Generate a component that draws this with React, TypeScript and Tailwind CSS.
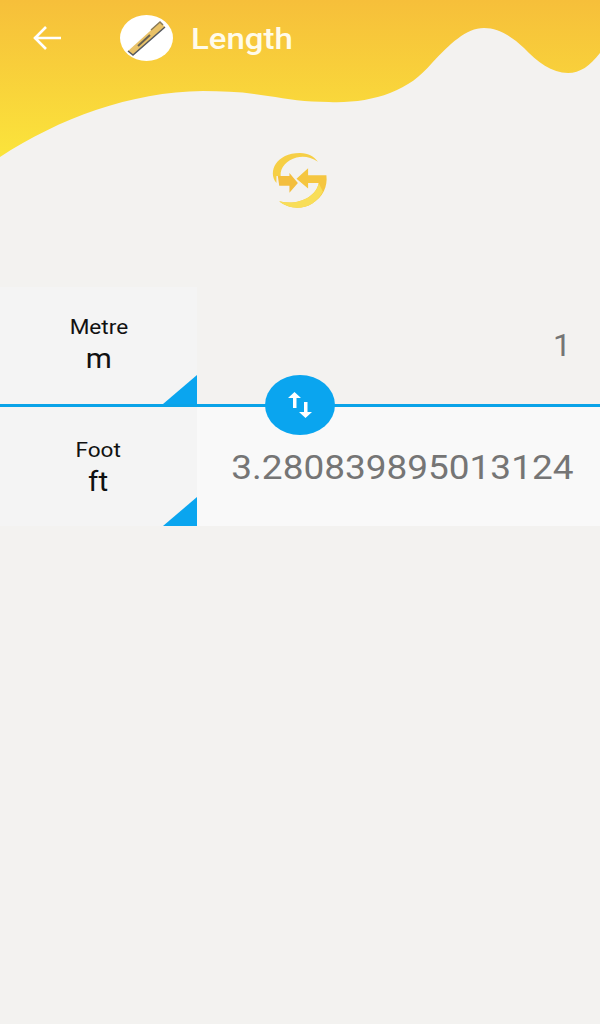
import React from 'react';

const Corner = () => (
  <div className="absolute bottom-0 right-0 w-[34px] h-[29px] bg-[#0AA5EF] [clip-path:polygon(100%_0,100%_100%,0_100%)]" />
);

const UnitCell = ({ name, symbol, pad }: { name: string; symbol: string; pad: string }) => (
  <div className={`relative w-[197px] shrink-0 bg-[#F4F4F4] flex flex-col items-center text-[#111] ${pad}`}>
    <span className="text-[20px] leading-[26px] scale-x-[1.13]">{name}</span>
    <span className="text-[27px] leading-[38px] scale-x-[1.1]">{symbol}</span>
    <Corner />
  </div>
);

const Wave = () => (
  <svg className="absolute top-0 left-0" width="600" height="160" viewBox="0 0 600 160">
    <defs>
      <linearGradient id="wave" x1="0" y1="0" x2="0" y2="1">
        <stop offset="0" stopColor="#F6BF3A" />
        <stop offset="1" stopColor="#FBE43B" />
      </linearGradient>
    </defs>
    <path
      d="M0 0H600V53C590 66 580 73 568 73C552 73 537 62 524 48C511 36 498 28 484 28C466 28 450 44 432 63C420 77 408 86 390 93C372 100 350 103 329 102C305 102 288 99 268 96C245 92 225 91 203 91C130 92 60 118 0 157Z"
      fill="url(#wave)"
    />
  </svg>
);

const Logo = () => (
  <svg width="88" height="77" viewBox="0 0 250 210">
    <path d="M58 112C32 80 58 27 125 27C150 27 165 38 176 52C155 38 135 35 115 40C88 47 68 68 70 92H58Z" fill="#F6CF45" />
    <path d="M62 92H95V84L119 112L95 140V120H66Z" fill="#F3BE3E" />
    <path d="M200 90H148V70L115 100L148 128V112H178C172 150 120 178 66 164C90 184 128 190 160 170C190 152 204 122 200 90Z" fill="#F5C640" />
    <path d="M178 112C172 150 120 178 66 164C90 184 128 190 160 170C172 162 184 150 190 136Z" fill="#F8DE58" />
  </svg>
);

export default function App() {
  return (
    <div className="relative w-[600px] min-h-[1024px] bg-[#F3F2F0] font-['Roboto',sans-serif]">
      <Wave />

      {/* Toolbar */}
      <div className="relative h-[287px]">
        <div className="flex items-center h-[76px] pl-[32px]">
          <svg width="30" height="26" viewBox="0 0 30 26" fill="none" stroke="#fff" strokeWidth="2.6">
            <path d="M2 13H29M14 2L3 13L14 24" />
          </svg>
          <div className="ml-[58px] w-[53px] h-[46px] rounded-[50%] bg-white flex items-center justify-center">
            <svg width="40" height="36" viewBox="0 0 40 36">
              <path d="M1 31L33 2L38 7L6 35Z" fill="#E9C268" />
              <path d="M1 31L6 35L38 7" fill="none" stroke="#55595F" strokeWidth="1.5" />
              <path d="M24 10L33 2L36 5" fill="none" stroke="#8A7A55" strokeWidth="1.5" />
              <path d="M11 26L23 15" stroke="#6A6250" strokeWidth="2" />
            </svg>
          </div>
          <span className="ml-[18px] text-[30px] font-medium text-[#FFFBEA] origin-left scale-x-110">Length</span>
        </div>
        <div className="flex justify-center mt-[66px]">
          <Logo />
        </div>
      </div>

      {/* Conversion rows */}
      <div className="relative">
        <div className="flex h-[117px]">
          <UnitCell name="Metre" symbol="m" pad="pt-[27px]" />
          <div className="flex-1 flex items-center justify-end pr-[29px] pb-[1px] text-[32px] text-[#757575]">1</div>
        </div>
        <div className="h-[3px] bg-[#0AA3E8]" />
        <div className="flex h-[119px]">
          <UnitCell name="Foot" symbol="ft" pad="pt-[30px]" />
          <div className="flex-1 flex items-center justify-end pr-[27px] pt-[2px] bg-[#F9F9F9] text-[#757575]">
            <span className="text-[33px] origin-right scale-x-[1.12]">3.280839895013124</span>
          </div>
        </div>

        {/* Swap button */}
        <div className="absolute left-[265px] top-[88px] w-[70px] h-[60px] rounded-[50%] bg-[#0AA5EF] flex items-center justify-center">
          <svg width="24" height="26" viewBox="0 0 24 26" fill="#fff">
            <path d="M6.5 0L13 6H8.5V16H5V6H0Z" />
            <path d="M16 10H19.5V20H24L17.5 26L11 20H16Z" />
          </svg>
        </div>
      </div>
    </div>
  );
}
